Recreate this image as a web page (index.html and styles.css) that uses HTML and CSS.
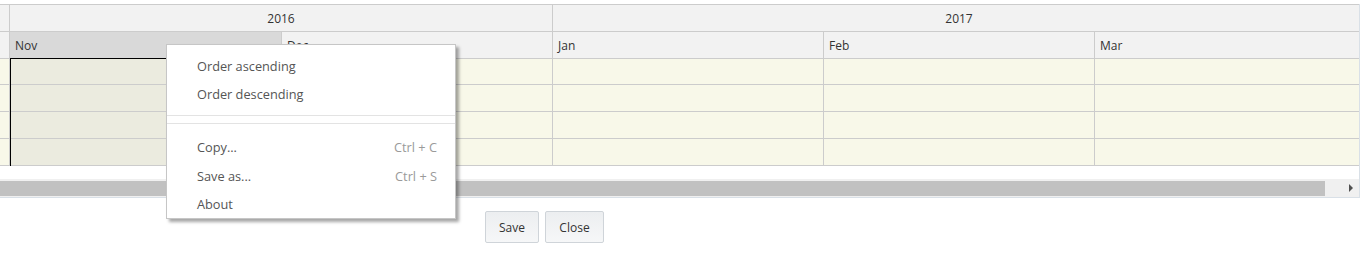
FILE: index.html
```html
<!DOCTYPE html>
<html>
<head>
<meta charset="utf-8">
<link rel="stylesheet" href="styles.css">
</head>
<body>
<div class="page">
  <div class="frame">
    <div class="viewport">
      <div class="row hrow">
        <div class="cell c0"></div>
        <div class="cell year y2016">2016</div>
        <div class="cell year y2017">2017</div>
      </div>
      <div class="row hrow">
        <div class="cell c0"></div>
        <div class="cell mon nov sel">Nov</div>
        <div class="cell mon w">Dec</div>
        <div class="cell mon w">Jan</div>
        <div class="cell mon w">Feb</div>
        <div class="cell mon w">Mar</div>
      </div>
      <div class="body">
        <div class="row drow first">
          <div class="cell c0"></div>
          <div class="cell nov sel"></div>
          <div class="cell w"></div>
          <div class="cell w"></div>
          <div class="cell w"></div>
          <div class="cell w"></div>
        </div>
        <div class="row drow">
          <div class="cell c0"></div>
          <div class="cell nov sel"></div>
          <div class="cell w"></div>
          <div class="cell w"></div>
          <div class="cell w"></div>
          <div class="cell w"></div>
        </div>
        <div class="row drow">
          <div class="cell c0"></div>
          <div class="cell nov sel"></div>
          <div class="cell w"></div>
          <div class="cell w"></div>
          <div class="cell w"></div>
          <div class="cell w"></div>
        </div>
        <div class="row drow">
          <div class="cell c0"></div>
          <div class="cell nov sel"></div>
          <div class="cell w"></div>
          <div class="cell w"></div>
          <div class="cell w"></div>
          <div class="cell w"></div>
        </div>
        <div class="selbox"></div>
      </div>
      <div class="spacer"></div>
    </div>
    <div class="hscroll">
      <div class="thumb"></div>
      <div class="arrowbox"><span class="arrow"></span></div>
    </div>
  </div>
  <div class="buttons">
    <button class="btn">Save</button>
    <button class="btn">Close</button>
  </div>

  <div class="menu">
    <div class="group top">
      <div class="item"><span>Order ascending</span></div>
      <div class="item"><span>Order descending</span></div>
    </div>
    <div class="sep"></div>
    <div class="group bottom">
      <div class="item"><span>Copy...</span><span class="key">Ctrl + C</span></div>
      <div class="item"><span>Save as...</span><span class="key">Ctrl + S</span></div>
      <div class="item"><span>About</span></div>
    </div>
  </div>
</div>
</body>
</html>
```

FILE: styles.css
```css
html, body {
  margin: 0;
  padding: 0;
  background: #ffffff;
}
body {
  font-family: "Open Sans", "Noto Sans", "Liberation Sans", sans-serif;
  font-size: 12px;
  color: #333333;
}
.page {
  position: relative;
  padding-top: 4px;
  width: 1370px;
  height: 249px;
  overflow: hidden;
}
.frame {
  width: 1359px;
  border-right: 1px solid #d9e0e7;
  border-bottom: 1px solid #d9e0e7;
}
.viewport {
  width: 1359px;
  overflow: hidden;
  border-top: 1px solid #cccccc;
}
.row {
  display: flex;
  width: 1400px;
}
.cell {
  box-sizing: border-box;
  flex: none;
  border-right: 1px solid #cccccc;
  border-bottom: 1px solid #cccccc;
}
.hrow {
  height: 27px;
}
.hrow .cell {
  background: #f2f2f2;
  line-height: 26px;
  padding-top: 1px;
}
.c0 {
  width: 10px;
}
.year {
  text-align: center;
}
.y2016 {
  width: 543px;
}
.y2017 {
  width: 813px;
}
.mon {
  padding-left: 5px;
}
.nov {
  width: 272px;
}
.w {
  width: 271px;
}
.hrow .nov.sel {
  background: #d9d9d9;
}
.body {
  position: relative;
}
.drow {
  height: 27px;
}
.drow.first {
  height: 26px;
}
.drow .cell {
  background: #f8f8e9;
}
.drow .nov.sel {
  background: #ebebdf;
}
.selbox {
  position: absolute;
  left: 10px;
  top: -1px;
  width: 272px;
  height: 108px;
  border-left: 1px solid #000000;
  border-top: 1px solid #000000;
  box-sizing: border-box;
  pointer-events: none;
}
.spacer {
  height: 13px;
  background: #ffffff;
}
.hscroll {
  display: flex;
  align-items: center;
  height: 18px;
  background: #f0f0f0;
}
.thumb {
  width: 1325px;
  height: 15px;
  background: #c1c1c1;
}
.arrowbox {
  flex: 1;
  display: flex;
  justify-content: flex-end;
  align-items: center;
  padding-right: 6px;
}
.arrow {
  width: 0;
  height: 0;
  border-top: 4px solid transparent;
  border-bottom: 4px solid transparent;
  border-left: 4px solid #505050;
}
.buttons {
  display: flex;
  gap: 6px;
  margin-top: 13px;
  padding-left: 485px;
}
.btn {
  font-family: "Open Sans", "Noto Sans", "Liberation Sans", sans-serif;
  font-size: 12px;
  color: #333333;
  height: 32px;
  padding: 0;
  border: 1px solid #cfd4d9;
  border-radius: 2px;
  background: linear-gradient(#eceef0, #f6f7f8);
}
.btn:first-child {
  width: 54px;
}
.btn:last-child {
  width: 59px;
}
.menu {
  position: absolute;
  left: 166px;
  top: 44px;
  width: 290px;
  height: 175px;
  box-sizing: border-box;
  overflow: hidden;
  background: #ffffff;
  border: 1px solid #c6c6c6;
  box-shadow: 3px 3px 3px rgba(0, 0, 0, 0.35);
  font-size: 12.75px;
  color: #555555;
}
.group.top {
  padding-top: 6.5px;
  padding-bottom: 6.5px;
  border-bottom: 1px solid #e3e3e3;
}
.sep {
  height: 7px;
  border-bottom: 1px solid #e3e3e3;
}
.group.bottom {
  padding-top: 9px;
}
.item {
  display: flex;
  justify-content: space-between;
  height: 28.5px;
  line-height: 28.5px;
  padding-left: 30px;
  padding-right: 18px;
}
.key {
  color: #9a9a9a;
}
```
